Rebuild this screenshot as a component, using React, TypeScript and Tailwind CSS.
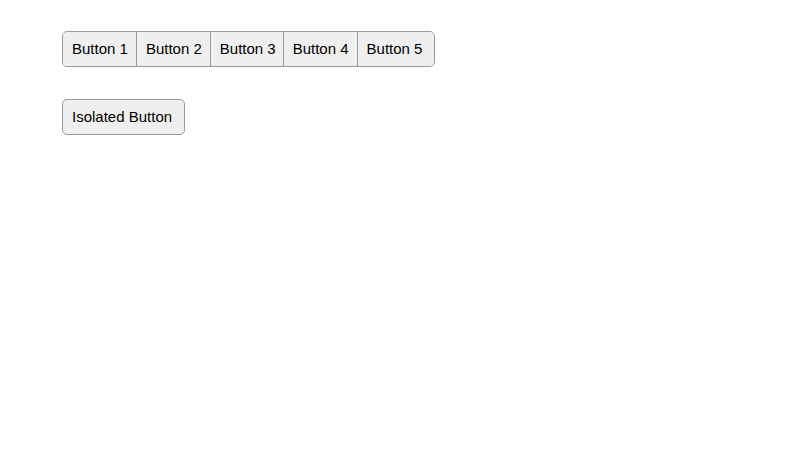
export default function App() {
  const labels = ["Button 1", "Button 2", "Button 3", "Button 4", "Button 5"];
  const padRight = ["pr-[8px]", "pr-[8px]", "pr-[7px]", "pr-[8px]", "pr-[12px]"];

  return (
    <div className="min-h-screen bg-white px-[62px] py-[31px] font-['Liberation_Sans',Arial,sans-serif] text-[15px] text-black">
      {/* Button group */}
      <div className="flex w-fit rounded-[5px] border border-[#9a9a9a] bg-[#efefef] overflow-hidden">
        {labels.map((label, i) => (
          <button
            key={label}
            className={
              "h-[34px] pl-[9px] pb-[2px] bg-[#efefef] leading-none " +
              (i > 0 ? "border-l border-[#9a9a9a] " : "") +
              padRight[i]
            }
          >
            {label}
          </button>
        ))}
      </div>

      {/* Isolated */}
      <div className="mt-[32px]">
        <button className="h-[36px] pl-[9px] pr-[12px] pb-[2px] rounded-[5px] border border-[#9a9a9a] bg-[#efefef] leading-none">
          Isolated Button
        </button>
      </div>
    </div>
  );
}
